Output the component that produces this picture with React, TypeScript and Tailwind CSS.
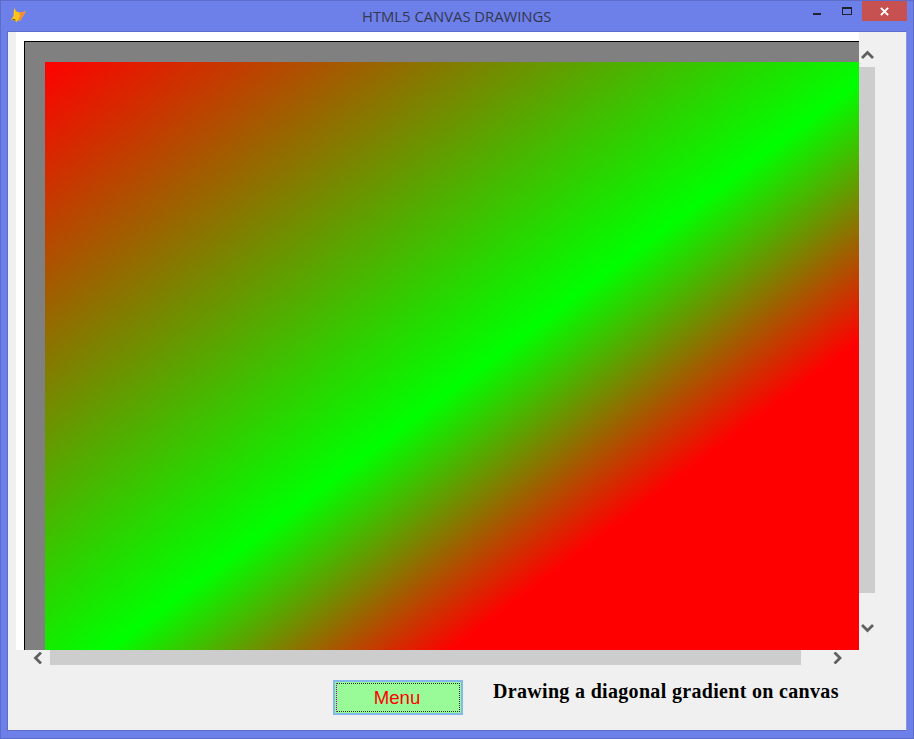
function Fox() {
    return (
        <svg width="18" height="18" viewBox="0 0 18 18" className="ml-[9px] mt-[6px]">
            <path d="M4 1 L6.5 4.5 L9 5.5 L16 4.5 L13 9 L10 14 L8 13 L7 15 L4 13.5 L1 13 L3.5 9 Z" fill="#fcc419" />
            <path d="M9 5.5 L16 4.5 L13 9 L10 14 L8.5 12 L10 9 Z" fill="#f08c3a" />
            <path d="M2.5 12.5 L5.5 13" stroke="#5a4a20" strokeWidth="1" />
        </svg>
    )
}

function Chevron({ dir }: { dir: 'up' | 'down' | 'left' | 'right' }) {
    const paths = {
        up: 'M1 8 L6.5 2.5 L12 8',
        down: 'M1 2 L6.5 7.5 L12 2',
        left: 'M8 0.5 L2.5 6 L8 11.5',
        right: 'M2.5 0.5 L8 6 L2.5 11.5',
    }
    const size = dir === 'up' || dir === 'down' ? 'w-[13px] h-[10px]' : 'w-[10px] h-[12px]'
    const box = dir === 'up' || dir === 'down' ? '0 0 13 10' : '0 0 10 12'
    return (
        <svg viewBox={box} className={size} fill="none" stroke="#606060" strokeWidth="2.8">
            <path d={paths[dir]} />
        </svg>
    )
}

export default function App() {
    return (
        <div className="w-[914px] h-[739px] bg-[#6d7fe9] border border-[#5d6cc8] flex flex-col overflow-hidden">
            <div className="h-[30px] flex shrink-0 relative">
                <Fox />
                <div className="absolute left-[361px] top-[6px] text-[14.8px] leading-[19px] text-[#33384f] font-['Open_Sans',sans-serif] whitespace-nowrap">
                    HTML5 CANVAS DRAWINGS
                </div>
                <div className="ml-auto flex items-start mr-[6px]">
                    <div className="w-[46px] h-[20px] flex justify-center">
                        <div className="w-[8px] h-[2px] bg-[#20232f] mt-[12px] ml-[-4px]"></div>
                    </div>
                    <div className="w-[20px] h-[20px] flex">
                        <div className="w-[10px] h-[8px] border border-[#20232f] border-t-[2px] mt-[6px]"></div>
                    </div>
                    <div className="w-[45px] h-[20px] bg-[#c75050] flex items-center justify-center">
                        <svg viewBox="0 0 10 10" className="w-[9px] h-[9px]" stroke="#fff" strokeWidth="2.2">
                            <path d="M1 1 L9 9 M9 1 L1 9" />
                        </svg>
                    </div>
                </div>
            </div>

            <div className="flex-1 mx-[6px] mb-[7px] bg-[#f0f0f0] border border-[#5d6cc8] border-r-[#8d98e0] flex flex-col">
                <div className="flex pl-[8px]">
                    <div className="w-[843px] h-[618px] bg-white pl-[8px] pt-[9px]">
                        <div className="w-[835px] h-[609px] bg-[#808080] border-l border-t border-black pl-[20px] pt-[20px]">
                            <div className="w-[814px] h-[588px] bg-[linear-gradient(142.9deg,#ff0000_0px,#00ff00_507px,#ff0000_714px)]"></div>
                        </div>
                    </div>
                    <div className="w-[16px] flex flex-col items-center">
                        <div className="h-[35px] flex items-end justify-center pb-[7px]"><Chevron dir="up" /></div>
                        <div className="w-[16px] h-[526px] bg-[#cdcdcd]"></div>
                        <div className="flex-1 flex items-end justify-center pb-[17px]"><Chevron dir="down" /></div>
                    </div>
                </div>

                <div className="h-[16px] flex items-center ml-[16px] w-[843px]">
                    <div className="w-[26px] flex justify-center pl-[1px]"><Chevron dir="left" /></div>
                    <div className="w-[751px] h-[15px] bg-[#cdcdcd] self-start"></div>
                    <div className="flex-1 flex justify-center pl-[6px]"><Chevron dir="right" /></div>
                </div>

                <div className="relative flex-1">
                    <button className="absolute left-[325px] top-[14px] w-[130px] h-[35px] bg-[#98fb98] border-2 border-[#84b8ec] p-[1px]">
                        <div className="w-full h-full border border-dotted border-[#303030] border-l-[#a000a0] flex items-center justify-center text-[18.6px] text-[#ff0000] font-['Liberation_Sans',sans-serif] pr-[2px]">
                            Menu
                        </div>
                    </button>
                    <div className="absolute left-[485px] top-[13px] text-[20px] leading-[24px] tracking-[0.32px] font-bold text-black font-['Liberation_Serif',serif] whitespace-nowrap">
                        Drawing a diagonal gradient on canvas
                    </div>
                </div>
            </div>
        </div>
    )
}
